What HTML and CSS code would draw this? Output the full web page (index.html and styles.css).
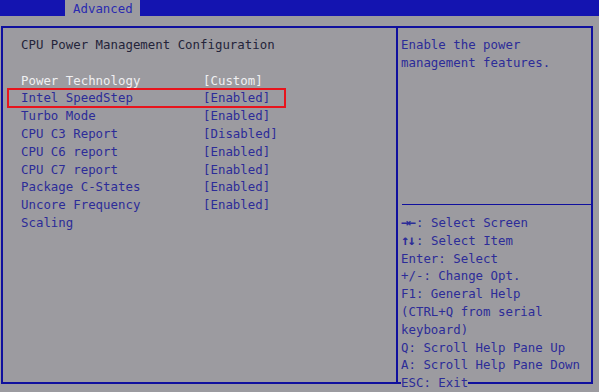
FILE: index.html
```html
<!DOCTYPE html>
<html lang="en">
<head>
    <meta charset="UTF-8">
    <meta name="viewport" content="width=device-width, initial-scale=1.0">
    <title>BIOS - Advanced</title>
    <link rel="stylesheet" href="styles.css">
</head>
<body>
    <div class="topbar">
        <div class="tab">Advanced</div>
    </div>

    <div class="frame">
        <div class="settings">
            <div class="title">CPU Power Management Configuration</div>
            <div class="list">
                <div class="row white"><span>Power Technology</span><span>[Custom]</span></div>
                <div class="row selected"><span>Intel SpeedStep</span><span>[Enabled]</span></div>
                <div class="row"><span>Turbo Mode</span><span>[Enabled]</span></div>
                <div class="row"><span>CPU C3 Report</span><span>[Disabled]</span></div>
                <div class="row"><span>CPU C6 report</span><span>[Enabled]</span></div>
                <div class="row"><span>CPU C7 report</span><span>[Enabled]</span></div>
                <div class="row"><span>Package C-States</span><span>[Enabled]</span></div>
                <div class="row"><span>Uncore Frequency</span><span>[Enabled]</span></div>
                <div class="row"><span>Scaling</span><span></span></div>
            </div>
        </div>

        <div class="help">
            <div class="desc">Enable the power<br>management features.</div>
            <div class="keys">
                <div><span class="arrows">→←</span>: Select Screen</div>
                <div><span class="arrows">↑↓</span>: Select Item</div>
                <div>Enter: Select</div>
                <div>+/-: Change Opt.</div>
                <div>F1: General Help</div>
                <div>(CTRL+Q from serial</div>
                <div>keyboard)</div>
                <div>Q: Scroll Help Pane Up</div>
                <div>A: Scroll Help Pane Down</div>
                <div><span class="last">ESC: Exit</span></div>
            </div>
        </div>
    </div>
</body>
</html>
```

FILE: styles.css
```css
body {
    margin: 0;
    width: 599px;
    height: 392px;
    overflow: hidden;
    background: #a3a59a;
    font-family: 'DejaVu Sans Mono', 'Liberation Mono', monospace;
    font-size: 12.4px;
    line-height: 17.8px;
    color: #2c2c98;
}

.topbar {
    background: #1414b0;
    height: 16px;
    padding-left: 65px;
}

.tab {
    background: #9c9ba0;
    color: #2a2ab0;
    width: 75px;
    height: 16px;
    line-height: 17px;
    padding-left: 8px;
    box-sizing: border-box;
}

.frame {
    display: flex;
    background: #9c9ba0;
    padding: 10px 6px 8px 1px;
    height: 358px;
}

.frame > div {
    border-top: 2px solid #10109e;
    border-bottom: 2px solid #10109e;
}

.settings {
    width: 395px;
    border-left: 2px solid #10109e;
    padding: 8px 0 0 5px;
    box-sizing: border-box;
}

.title {
    color: #24243a;
    padding-left: 13px;
    margin-bottom: 17.8px;
}

.list {
    width: 277px;
}

.row {
    display: grid;
    grid-template-columns: 182px 1fr;
    padding-left: 13px;
    white-space: pre;
}

.white {
    color: #f0f0f2;
}

.selected {
    outline: 2px solid #e8141c;
    outline-offset: -1px;
}

.help {
    flex: 1;
    display: flex;
    flex-direction: column;
    border-left: 2px solid #10109e;
    border-right: 2px solid #10109e;
    padding: 8px 0 0 3px;
    box-sizing: border-box;
    white-space: nowrap;
}

.keys {
    margin-top: auto;
    margin-bottom: -10px;
    margin-left: 1px;
    border-top: 1.5px solid #10109e;
    padding-top: 9px;
}

.keys > div {
    margin-left: -1px;
}

.arrows {
    display: inline-block;
    width: 15px;
    font-size: 14px;
    font-weight: bold;
    letter-spacing: -2px;
    line-height: 17.8px;
    vertical-align: top;
}

.last {
    background: #9c9ba0;
}
```
